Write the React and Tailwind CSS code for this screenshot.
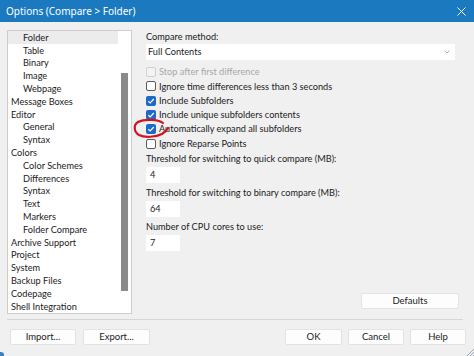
import React from 'react'

const treeItems = [
  { label: 'Folder', indent: true, selected: true },
  { label: 'Table', indent: true },
  { label: 'Binary', indent: true },
  { label: 'Image', indent: true },
  { label: 'Webpage', indent: true },
  { label: 'Message Boxes' },
  { label: 'Editor' },
  { label: 'General', indent: true },
  { label: 'Syntax', indent: true },
  { label: 'Colors' },
  { label: 'Color Schemes', indent: true },
  { label: 'Differences', indent: true },
  { label: 'Syntax', indent: true },
  { label: 'Text', indent: true },
  { label: 'Markers', indent: true },
  { label: 'Folder Compare', indent: true },
  { label: 'Archive Support' },
  { label: 'Project' },
  { label: 'System' },
  { label: 'Backup Files' },
  { label: 'Codepage' },
  { label: 'Shell Integration' },
]

const options = [
  { label: 'Stop after first difference', disabled: true },
  { label: 'Ignore time differences less than 3 seconds' },
  { label: 'Include Subfolders', checked: true },
  { label: 'Include unique subfolders contents', checked: true },
  { label: 'Automatically expand all subfolders', checked: true },
  { label: 'Ignore Reparse Points' },
]

const numbers = [
  { label: 'Threshold for switching to quick compare (MB):', value: '4' },
  { label: 'Threshold for switching to binary compare (MB):', value: '64' },
  { label: 'Number of CPU cores to use:', value: '7' },
]

const Checkbox = ({ checked, disabled }) => {
  if (checked) {
    return (
      <span className="w-[10px] h-[10px] rounded-[2px] bg-[#1c6ac8] flex items-center justify-center shrink-0">
        <svg width="8" height="8" viewBox="0 0 8 8">
          <path d="M1.3 4.2 L3.2 6 L6.8 2" fill="none" stroke="#fff" strokeWidth="1.2" />
        </svg>
      </span>
    )
  }
  return (
    <span
      className={`w-[10px] h-[10px] rounded-[2px] border shrink-0 ${disabled ? 'border-[#cfcfcf] bg-[#f3f3f3]' : 'border-[#5a5a5a] bg-white'}`}
    />
  )
}

const Button = ({ children, className = '' }) => (
  <div className={`h-[16px] flex items-center justify-center bg-[#fdfdfd] border border-[#e3e3e3] rounded-[2px] text-[9.5px] text-[#1b1b1b] ${className}`}>
    {children}
  </div>
)

const App = () => {
  return (
    <div className="w-[474px] h-[356px] bg-[#f0f0f0] flex flex-col relative overflow-hidden font-['Lato',sans-serif] text-[#1b1b1b]">
      {/* title bar */}
      <div className="h-[22px] bg-[#1b7abf] flex items-center justify-between pl-[6px] pr-[8px] text-white">
        <span className="text-[10px] font-['Noto_Sans',sans-serif]">Options (Compare &gt; Folder)</span>
        <svg width="9" height="9" viewBox="0 0 9 9">
          <path d="M0.5 0.5 L8.5 8.5 M8.5 0.5 L0.5 8.5" stroke="#fff" strokeWidth="1" />
        </svg>
      </div>

      <div className="flex pl-[7px] pt-[8px]">
        {/* tree */}
        <div className="w-[125px] h-[284px] bg-white border border-[#cdcdcd] flex overflow-hidden">
          <div className="flex-1 flex flex-col">
            {treeItems.map((item, i) => (
              <div
                key={i}
                className={`h-[12.8px] shrink-0 flex items-center text-[9.2px] leading-none ${item.indent ? 'pl-[15px]' : 'pl-[3px]'} ${item.selected ? 'bg-[#ececec]' : ''}`}
              >
                {item.label}
              </div>
            ))}
          </div>
          <div className="w-[13px] pt-[42px] pb-[22px] flex justify-center">
            <div className="w-[7px] h-full bg-[#8a8a8a]" />
          </div>
        </div>

        {/* right panel */}
        <div className="ml-[14px] w-[311px] h-[283px] flex flex-col">
          <div className="h-[14px] flex items-center text-[9.2px]">Compare method:</div>
          <div className="w-[309px] h-[16px] bg-white flex items-center justify-between pl-[2px] pr-[5px] text-[9.2px]">
            <span>Full Contents</span>
            <svg width="6" height="4" viewBox="0 0 6 4">
              <path d="M0.5 0.5 L3 3 L5.5 0.5" fill="none" stroke="#9a9a9a" strokeWidth="0.8" />
            </svg>
          </div>
          <div className="mt-[5px] flex flex-col">
            {options.map((o, i) => (
              <div key={i} className="h-[14.3px] flex items-center gap-[3px]">
                <Checkbox checked={o.checked} disabled={o.disabled} />
                <span className={`text-[9.2px] ${o.disabled ? 'text-[#a8a8a8]' : ''}`}>{o.label}</span>
              </div>
            ))}
          </div>
          <div className="flex flex-col">
            {numbers.map((n, i) => (
              <div key={i} className={`flex flex-col ${i > 0 ? 'mt-[3px]' : 'mt-[1px]'}`}>
                <div className="h-[14px] flex items-center text-[9.2px]">{n.label}</div>
                <div className="mt-[1px] w-[34px] h-[16px] bg-white flex items-center pl-[4px] text-[9.2px]">{n.value}</div>
              </div>
            ))}
          </div>
          <Button className="mt-auto mb-[4px] self-end w-[98px] mr-[-2px]">Defaults</Button>
        </div>
      </div>

      {/* separator */}
      <div className="mt-[5px] ml-[7px] w-[456px] h-[1px] bg-[#d6d6d6]" />

      {/* buttons */}
      <div className="mt-[9px] flex items-center pl-[10px]">
        <Button className="w-[66px]">Import...</Button>
        <Button className="w-[67px] ml-[7px]">Export...</Button>
        <Button className="w-[57px] ml-[135px] border-[#9dbad9]">OK</Button>
        <Button className="w-[56px] ml-[6px]">Cancel</Button>
        <Button className="w-[56px] ml-[6px]">Help</Button>
      </div>

      {/* red annotation */}
      <svg className="absolute left-[132px] top-[117px]" width="40" height="22" viewBox="0 0 40 22">
        <path
          d="M31 6 C26 2 12 2 6 5 C1 8 2 15 7 18 C13 21 24 20 30 17 C33 15 35 13 36 11"
          fill="none"
          stroke="#d3121d"
          strokeWidth="2.2"
          strokeLinecap="round"
        />
      </svg>

      {/* resize grip */}
      <svg className="absolute right-0 bottom-0" width="9" height="9" viewBox="0 0 9 9">
        <path d="M9 2 L2 9 M9 5 L5 9 M9 8 L8 9" stroke="#9aa8b6" strokeWidth="1" />
      </svg>
      <div className="absolute left-0 bottom-0 w-[4px] h-[4px] bg-[#3f7fb8] rounded-tr-[3px]" />
    </div>
  )
}

export default App
